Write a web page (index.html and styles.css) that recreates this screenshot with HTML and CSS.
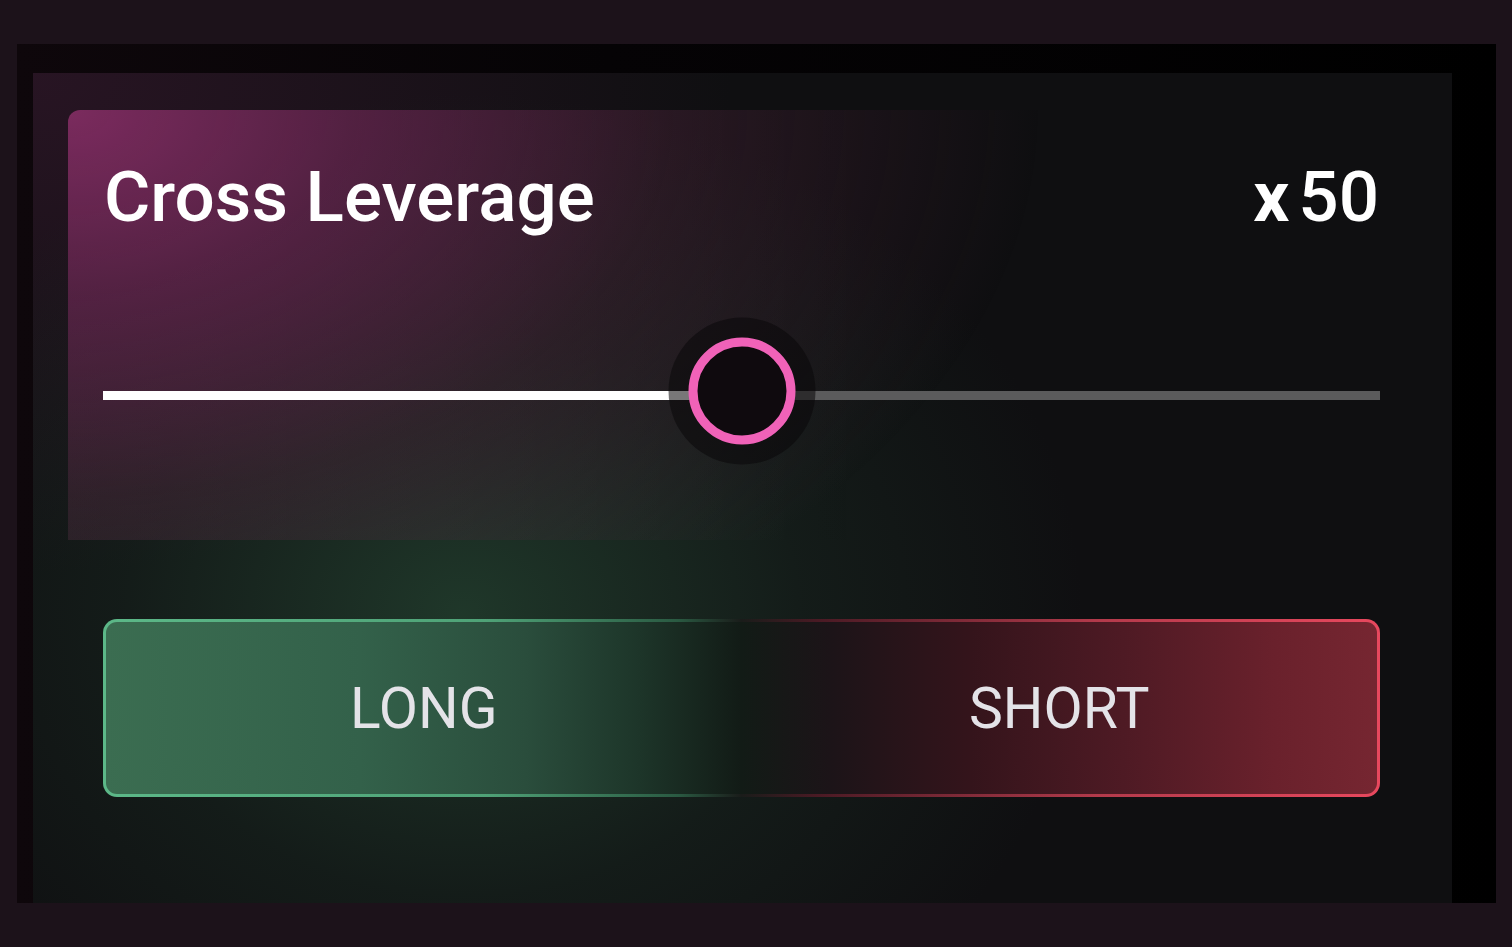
FILE: index.html
```html
<!DOCTYPE html>
<html lang="en">
<head>
<meta charset="utf-8">
<title>Cross Leverage</title>
<link rel="stylesheet" href="styles.css">
</head>
<body>
  <div class="frame">
    <div class="panel">
      <section class="card">
        <div class="card-head">
          <h2 class="title">Cross Leverage</h2>
          <div class="value"><span class="mult">x</span>50</div>
        </div>
        <div class="slider">
          <div class="track">
            <div class="fill" style="width: 50%"></div>
          </div>
          <div class="halo" style="left: 50%"></div>
          <div class="thumb" style="left: 50%"></div>
        </div>
      </section>
      <div class="sides">
        <button class="side long">LONG</button>
        <button class="side short">SHORT</button>
      </div>
    </div>
  </div>
</body>
</html>
```

FILE: styles.css
```css
html, body {
  margin: 0;
  padding: 0;
}
body {
  background: #1c121a;
  width: 1512px;
  height: 947px;
  overflow: hidden;
  font-family: Roboto, "Liberation Sans", sans-serif;
}
.frame {
  margin: 44px 0 0 17px;
  width: 1479px;
  height: 859px;
  box-sizing: border-box;
  padding: 29px 44px 0 16px;
  background: linear-gradient(to right, #0e070b 0%, #050305 40%, #000 100%);
  overflow: hidden;
}
.panel {
  width: 1419px;
  height: 830px;
  box-sizing: border-box;
  padding: 37px 35px 0 35px;
  background:
    radial-gradient(ellipse 620px 520px at 430px 540px, rgba(42, 82, 58, 0.6), rgba(32, 60, 45, 0.28) 55%, rgba(0,0,0,0) 100%),
    radial-gradient(ellipse 700px 500px at 0 0, rgba(60, 25, 50, 0.55), rgba(0,0,0,0) 100%),
    #0f0f11;
  overflow: hidden;
}
.card {
  height: 430px;
  box-sizing: border-box;
  padding: 51px 36px 0 36px;
  border-radius: 12px 12px 0 0;
  background:
    radial-gradient(ellipse 72% 145% at 0 0, #7b2b5e 0%, rgba(92, 34, 72, 0.82) 30%, rgba(62, 30, 48, 0.5) 62%, rgba(20, 15, 20, 0) 100%),
    linear-gradient(to right, rgba(255,255,255,0.05), rgba(255,255,255,0.0) 60%);
}
.card-head {
  display: flex;
  justify-content: space-between;
  align-items: baseline;
  color: #ffffff;
}
.title {
  margin: 0;
  font-size: 71px;
  line-height: 71px;
  font-weight: 500;
}
.value {
  font-size: 71px;
  line-height: 71px;
  font-weight: 500;
  margin-right: 2px;
}
.mult {
  font-weight: 700;
  margin-right: 9px;
}
.slider {
  position: relative;
  margin-top: 159px;
  height: 9px;
  margin-left: -1px;
  margin-right: 1px;
}
.track {
  height: 9px;
  background: #5b5b5c;
}
.fill {
  height: 9px;
  background: #ffffff;
}
.halo {
  position: absolute;
  top: -0.5px;
  width: 147px;
  height: 147px;
  border-radius: 50%;
  background: rgba(10, 8, 10, 0.55);
  transform: translate(-50%, -50%);
}
.thumb {
  position: absolute;
  top: -0.5px;
  width: 107px;
  height: 107px;
  box-sizing: border-box;
  border-radius: 50%;
  border: 9px solid #f062b8;
  background: #0f0a0e;
  transform: translate(-50%, -50%);
}
.sides {
  display: flex;
  margin: 79px 37px 0 35px;
  height: 178px;
  border: 3px solid transparent;
  border-radius: 14px;
  box-sizing: border-box;
  background:
    linear-gradient(to right, #3b6d51 0%, #33614a 20%, #2a4d3c 33%, #1d3529 42%, #121b16 50%, #1c1418 57%, #34141b 68%, #4e1a24 80%, #6a212c 92%, #762631 100%) padding-box,
    linear-gradient(to right, #5cb888 0%, #4fa277 30%, #2a5a42 45%, #1a1c1a 50%, #4a1a24 56%, #b33a4b 78%, #e8485e 100%) border-box;
}
.side {
  flex: 1;
  border: 0;
  background: transparent;
  color: #e4e3e8;
  font-family: Roboto, "Liberation Sans", sans-serif;
  font-size: 57px;
  font-weight: 400;
  padding: 0;
  cursor: pointer;
}
```
